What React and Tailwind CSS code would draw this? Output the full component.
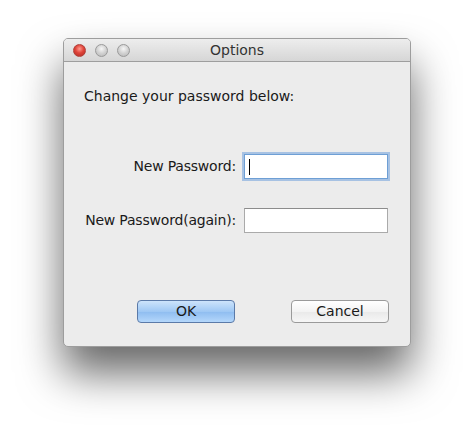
import React from "react";

function Light({ red }) {
  return (
    <div
      className={
        red
          ? "w-[13px] h-[13px] rounded-full border border-[#b0403a] bg-[radial-gradient(circle_at_50%_35%,#ff9b8f_0%,#e0453b_45%,#b02a22_100%)]"
          : "w-[13px] h-[13px] rounded-full border border-[#9a9a9a] bg-[radial-gradient(circle_at_50%_35%,#f6f6f6_0%,#d2d2d2_50%,#b5b5b5_100%)]"
      }
    />
  );
}

function Label({ children }) {
  return (
    <div className="w-[160px] shrink-0 flex justify-end pr-[8px] text-[14px] whitespace-nowrap tracking-[-0.2px]">
      {children}
    </div>
  );
}

export default function App() {
  return (
    <div className="w-[474px] h-[434px] bg-white pt-[38px] pl-[63px] font-['DejaVu_Sans',sans-serif] text-[#1a1a1a]">
      <div className="w-[348px] h-[309px] rounded-[5px] border border-[#9d9d9d] bg-[#ececec] shadow-[0_26px_44px_rgba(0,0,0,0.6)] flex flex-col overflow-hidden">
        <div className="h-[23px] flex items-center pl-[9px] border-b border-[#9e9e9e] bg-[linear-gradient(#ededed,#d6d6d6)] relative">
          <div className="flex gap-[9px]">
            <Light red />
            <Light />
            <Light />
          </div>
          <div className="absolute inset-0 flex items-center justify-center text-[14px] text-[#333]">
            Options
          </div>
        </div>
        <div className="flex-1 flex flex-col px-[20px]">
          <div className="mt-[24px] h-[20px] leading-[20px] text-[14px]">Change your password below:</div>
          <div className="mt-[48px] flex items-center h-[25px]">
            <Label>New Password:</Label>
            <div className="w-[144px] h-[25px] bg-white border border-[#6e9fd5] shadow-[0_0_0_2px_rgba(122,166,222,0.6)] flex items-center pl-[4px]">
              <div className="w-px h-[16px] bg-black" />
            </div>
          </div>
          <div className="mt-[29px] flex items-center h-[25px]">
            <Label>New Password(again):</Label>
            <div className="w-[144px] h-[25px] bg-white border border-[#aaaaaa] border-t-[#8c8c8c]" />
          </div>
          <div className="mt-[67px] flex justify-between pl-[53px] pr-[1px]">
            <button className="w-[98px] h-[23px] rounded-[4px] border border-[#5b7aa8] bg-[linear-gradient(#cde4fb,#9fc8f4_50%,#8ebcf0_51%,#b4d7fb)] text-[14px]">
              OK
            </button>
            <button className="w-[98px] h-[23px] rounded-[4px] border border-[#9a9a9a] bg-[linear-gradient(#ffffff,#f3f3f3_50%,#e9e9e9_51%,#f6f6f6)] text-[14px]">
              Cancel
            </button>
          </div>
        </div>
      </div>
    </div>
  );
}
